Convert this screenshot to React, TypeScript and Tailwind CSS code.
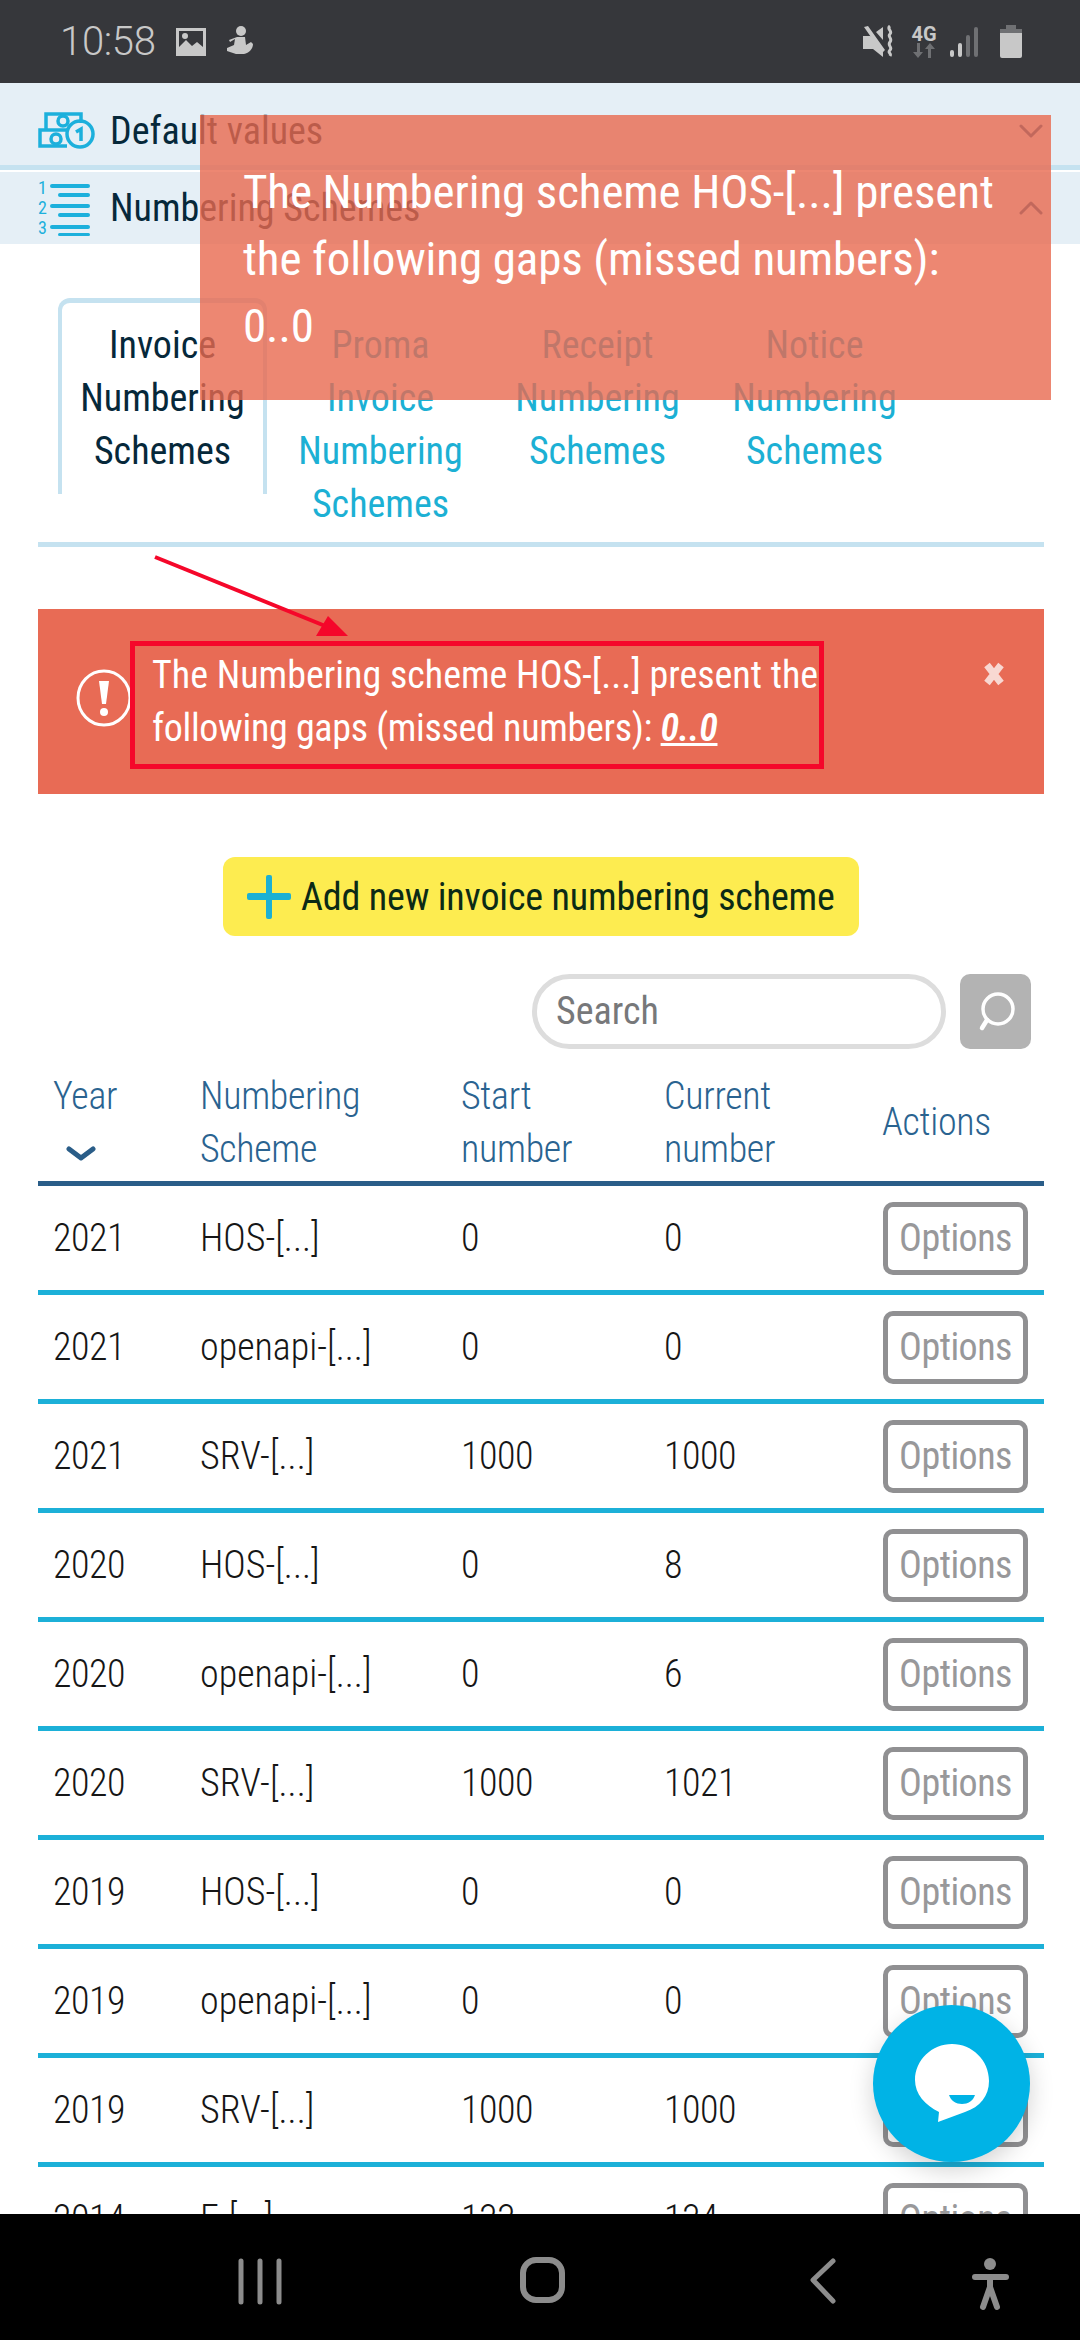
import React from "react";

const rows = [
  ["2021", "HOS-[...]", "0", "0"],
  ["2021", "openapi-[...]", "0", "0"],
  ["2021", "SRV-[...]", "1000", "1000"],
  ["2020", "HOS-[...]", "0", "8"],
  ["2020", "openapi-[...]", "0", "6"],
  ["2020", "SRV-[...]", "1000", "1021"],
  ["2019", "HOS-[...]", "0", "0"],
  ["2019", "openapi-[...]", "0", "0"],
  ["2019", "SRV-[...]", "1000", "1000"],
  ["2014", "E-[...]", "133", "134"],
];

const tabs = [
  ["Proma", "Invoice", "Numbering", "Schemes"],
  ["Receipt", "Numbering", "Schemes"],
  ["Notice", "Numbering", "Schemes"],
];

function StatusBar() {
  return (
    <div className="h-[83px] shrink-0 bg-[#36373b] flex items-center pl-[60px] pr-[58px] relative">
      <span className="text-[40px] leading-none text-[#c8c8c8] font-light [font-stretch:100%] tracking-[-0.3px]">10:58</span>
      <svg width="32" height="30" viewBox="0 0 32 30" className="ml-[19px]">
        <path fillRule="evenodd" fill="#c8c8c8" d="M1 1h30v28H1zM4 4v16l7-7 6 6 5-4 6 5V4zM10 6a3 3 0 1 1 0 6 3 3 0 0 1 0-6z" />
      </svg>
      <svg width="28" height="32" viewBox="0 0 28 32" className="ml-[19px]">
        <circle cx="15" cy="5" r="5" fill="#c8c8c8" />
        <path fill="#c8c8c8" d="M11 11h8l1 8 5-3 2 2c0 5-4 9-9 10H10l-9-3 0-3 7-3 1-6-5 3-1-2z" />
      </svg>
      <div className="flex-1" />
      <svg width="33" height="33" viewBox="0 0 33 33">
        <path fill="#c8c8c8" d="M1 11h6l1 0 13 12v9L11 24H1zM2 2l4-1 17 24-3 3zM14 7l7-5v13z" />
        <path fill="none" stroke="#c8c8c8" strokeWidth="3" d="M28 1c-4 3 3 5 0 8s3 4 0 8 3 5 0 8 2 3 0 6" />
      </svg>
      <div className="ml-[17px] w-[24px] flex flex-col items-center">
        <span className="text-[20px] leading-[16px] font-bold text-[#c8c8c8] [font-stretch:100%]">4G</span>
        <svg width="24" height="15" viewBox="0 0 24 15" className="mt-[1px]">
          <path fill="#6f7073" d="M5 0h3v9h3l-5 6-5-6h4zM16 15h3V6h4l-5-6-5 6h3z" />
        </svg>
      </div>
      <svg width="28" height="30" viewBox="0 0 28 30" className="ml-[14px]">
        <rect x="0" y="23" width="4" height="7" rx="2" fill="#c8c8c8" />
        <rect x="8" y="16" width="4" height="14" rx="2" fill="#c8c8c8" />
        <rect x="16" y="8" width="4" height="22" rx="2" fill="#6f7073" />
        <rect x="24" y="0" width="4" height="30" rx="2" fill="#6f7073" />
      </svg>
      <svg width="22" height="33" viewBox="0 0 22 33" className="ml-[22px]">
        <path fill="#6f7073" d="M6 0h10v4h6v5H0V4h6z" />
        <path fill="#c8c8c8" d="M0 8h22v23a2 2 0 0 1-2 2H2a2 2 0 0 1-2-2z" />
      </svg>
    </div>
  );
}

function AccordionRow({ icon, label, up, cls }: { icon: React.ReactNode; label: string; up?: boolean; cls: string }) {
  return (
    <div className={`${cls} bg-[#e5eff6] flex items-center pl-[38px] pr-[37px]`}>
      <div className="w-[72px] flex items-center">{icon}</div>
      <span className="text-[#06283a] text-[38px] leading-none">{label}</span>
      <div className="flex-1" />
      <svg width="24" height="14" viewBox="0 0 24 14" fill="none" stroke="#2a6390" strokeWidth="3" strokeLinecap="round" strokeLinejoin="round">
        <path d={up ? "M2 12 12 2l10 10" : "M2 2l10 10L22 2"} />
      </svg>
    </div>
  );
}

function MoneyIcon() {
  return (
    <svg width="58" height="38" viewBox="0 0 58 38" fill="none" stroke="#1cb0dc" strokeWidth="3.5">
      <path d="M8 18V2h35v9" />
      <circle cx="25" cy="9" r="5" />
      <path d="M30 18H2v16h27" />
      <circle cx="18" cy="27" r="5" />
      <circle cx="42" cy="22" r="13" />
      <path d="M38 20l5-3v12" strokeWidth="3.5" />
    </svg>
  );
}

function ListIcon() {
  return (
    <svg width="54" height="58" viewBox="0 0 54 58">
      <g fill="#1cb0dc">
        <text x="0" y="15" fontSize="18">1</text>
        <text x="0" y="35" fontSize="18">2</text>
        <text x="0" y="55" fontSize="18">3</text>
        <rect x="12" y="5" width="40" height="4" rx="2" />
        <rect x="20" y="14" width="32" height="4" rx="2" />
        <rect x="12" y="25" width="40" height="4" rx="2" />
        <rect x="20" y="34" width="32" height="4" rx="2" />
        <rect x="12" y="46" width="40" height="4" rx="2" />
        <rect x="20" y="54" width="32" height="3" rx="1.5" />
      </g>
    </svg>
  );
}

function Tabs() {
  return (
    <div className="ml-[38px] mr-[36px] mt-[54px] border-b-[5px] border-[#c5e2f0] h-[249px] flex items-start pl-[20px]">
      <div className="w-[209px] h-[196px] border-x-[4px] border-t-[5px] border-[#c5e2f0] rounded-t-[12px] text-center text-[#06283a] text-[38px] leading-[53px] pt-[16px] shrink-0">
        <div>Invoice</div>
        <div>Numbering</div>
        <div>Schemes</div>
      </div>
      <div className="flex ml-[5px]">
        {tabs.map((t, i) => (
          <div key={i} className="w-[217px] text-center text-[#1cb0d4] text-[38px] leading-[53px] pt-[21px]">
            {t.map((l) => (
              <div key={l}>{l}</div>
            ))}
          </div>
        ))}
      </div>
    </div>
  );
}

function Alert() {
  return (
    <div className="ml-[38px] mr-[36px] mt-[62px] h-[185px] bg-[#e86b55] flex items-start relative text-white">
      <svg width="56" height="58" viewBox="0 0 56 58" className="absolute left-[38px] top-[60px]">
        <ellipse cx="28" cy="29" rx="26" ry="27" fill="none" stroke="#ffffff" strokeWidth="3" />
        <path d="M23 12h10l-3 23h-4z" fill="#ffffff" />
        <circle cx="28" cy="43" r="4" fill="#ffffff" />
      </svg>
      <div className="ml-[92px] mt-[32px] w-[694px] h-[128px] border-[5px] border-[#f5072a] relative z-10 pl-[17px] text-[38px] leading-[53px] whitespace-nowrap">
        <div className="mt-[3px]">The Numbering scheme HOS-[...] present the</div>
        <div className="tracking-[-0.3px]">
          following gaps (missed numbers): <span className="italic font-semibold underline">0..0</span>
        </div>
      </div>
      <svg width="20" height="24" viewBox="0 0 20 24" className="absolute left-[946px] top-[53px]" stroke="#f8d8d2" strokeWidth="7">
        <path d="M3 3l14 18M17 3 3 21" />
      </svg>
    </div>
  );
}

function AddButton() {
  return (
    <div className="flex justify-center mt-[63px] ml-[2px]">
      <div className="w-[636px] h-[79px] rounded-[12px] bg-[#fdec50] flex items-center pl-[24px]">
        <svg width="44" height="44" viewBox="0 0 44 44" className="shrink-0">
          <rect x="19" y="0" width="6" height="44" rx="2" fill="#1cb0d4" />
          <rect x="0" y="18" width="44" height="7" rx="2" fill="#1cb0d4" />
        </svg>
        <span className="ml-[10px] text-[38px] leading-none text-[#0b2a16] whitespace-nowrap tracking-[-0.15px]">Add new invoice numbering scheme</span>
      </div>
    </div>
  );
}

function SearchBar() {
  return (
    <div className="flex justify-end mt-[38px] mr-[49px] gap-[14px]">
      <div className="w-[414px] h-[75px] rounded-full border-[5px] border-[#dddddd] flex items-center pl-[19px] text-[38px] text-[#77787a] bg-white">
        Search
      </div>
      <div className="w-[71px] h-[75px] rounded-[10px] bg-[#b3b3b3] flex items-center justify-center">
        <svg width="40" height="42" viewBox="0 0 40 42" fill="none" stroke="#ffffff" strokeWidth="3.5" strokeLinecap="round">
          <ellipse cx="22" cy="18" rx="15" ry="15" />
          <path d="M11 29l-5 8" strokeWidth="4.5" />
        </svg>
      </div>
    </div>
  );
}

function Table() {
  const cols = "grid grid-cols-[146px_261px_203px_219px_177px]";
  return (
    <div className="ml-[38px] mr-[36px] mt-[15px] text-[38px] font-[350] tracking-[-0.5px]">
      <div className={`${cols} h-[122px] border-b-[5px] border-[#2a5d88] text-[#2a6390] leading-[53px] pt-[6px] tracking-[-0.3px]`}>
        <div className="pl-[15px]">
          <div>Year</div>
          <svg width="30" height="16" viewBox="0 0 30 16" fill="none" stroke="#2a5d88" strokeWidth="5" strokeLinecap="round" strokeLinejoin="round" className="ml-[13px] mt-[23px]">
            <path d="M3 3l12 9 12-9" />
          </svg>
        </div>
        <div className="pl-[16px]">
          <div>Numbering</div>
          <div>Scheme</div>
        </div>
        <div className="pl-[16px]">
          <div>Start</div>
          <div>number</div>
        </div>
        <div className="pl-[16px]">
          <div>Current</div>
          <div>number</div>
        </div>
        <div className="pl-[15px] flex items-center pb-[6px]">Actions</div>
      </div>
      {rows.map((r, i) => (
        <div key={i} className={`${cols} h-[109px] border-b-[5px] border-[#1cb0d8] text-[#161616] items-center`}>
          <div className="pl-[15px]">{r[0]}</div>
          <div className="pl-[16px] tracking-normal">{r[1]}</div>
          <div className="pl-[16px]">{r[2]}</div>
          <div className="pl-[16px]">{r[3]}</div>
          <div className="pl-[16px]">
            <div className="w-[145px] h-[73px] rounded-[10px] border-[5px] border-[#909092] text-[#98989a] font-normal flex items-center justify-center">
              Options
            </div>
          </div>
        </div>
      ))}
    </div>
  );
}

function NavBar() {
  return (
    <div className="h-[126px] shrink-0 bg-black relative flex items-center">
      <svg width="1080" height="126" viewBox="0 0 1080 126" fill="none" stroke="#8c8c8c" strokeLinecap="round" strokeLinejoin="round">
        <path d="M241 47v41M260 47v41M279 47v41" strokeWidth="5" />
        <rect x="523" y="46" width="39" height="40" rx="13" strokeWidth="6" />
        <path d="M833 47 813 66l20 21" strokeWidth="5" />
        <circle cx="990" cy="50" r="6" fill="#8c8c8c" stroke="none" />
        <path d="M975 63h31" strokeWidth="6" />
        <path d="M990 63v10M990 73l-7 20M990 73l7 20" strokeWidth="6" />
      </svg>
    </div>
  );
}

function ChatBubble() {
  return (
    <div className="absolute left-[873px] top-[2005px] w-[157px] h-[157px] rounded-full bg-[#00b3e6] shadow-[0_8px_24px_rgba(0,0,0,0.18)] flex items-center justify-center">
      <svg width="76" height="84" viewBox="0 0 76 84">
        <path fill="#ffffff" d="M38 2c20 0 37 16 37 37 0 15-9 26-24 31L24 80l1-10C11 63 1 52 1 38 1 18 18 2 38 2z" />
        <path fill="#00b3e6" d="M35 53h26c-2 6-7 9-13 9s-11-3-13-9z" />
      </svg>
    </div>
  );
}

export default function App() {
  return (
    <div className="relative w-[1080px] h-[2340px] overflow-hidden bg-white font-['Roboto','sans-serif'] [font-stretch:75%] flex flex-col">
      <StatusBar />
      <div className="flex-1 min-h-0 overflow-hidden">
        <AccordionRow cls="h-[87px] border-b-[5px] border-[#c5e2f0] pt-[14px]" icon={<MoneyIcon />} label="Default values" />
        <div className="h-[2px] bg-white" />
        <AccordionRow cls="h-[72px]" up icon={<ListIcon />} label="Numbering Schemes" />
        <Tabs />
        <Alert />
        <AddButton />
        <SearchBar />
        <Table />
      </div>
      <NavBar />
      <svg width="200" height="90" viewBox="0 0 200 90" className="absolute left-[150px] top-[552px] z-10">
        <path d="M5 5 190 80" stroke="#f5072a" strokeWidth="4" />
        <path d="M198 84 166 84 178 64z" fill="#f5072a" />
      </svg>
      <div className="absolute left-[200px] top-[115px] w-[851px] h-[285px] bg-[#e8694f]/80 pl-[43px] pt-[43px] text-white text-[47px] leading-[67px] z-20 tracking-[-0.1px]">
        The Numbering scheme HOS-[...] present the following gaps (missed numbers):
        <div>0..0</div>
      </div>
      <ChatBubble />
    </div>
  );
}
